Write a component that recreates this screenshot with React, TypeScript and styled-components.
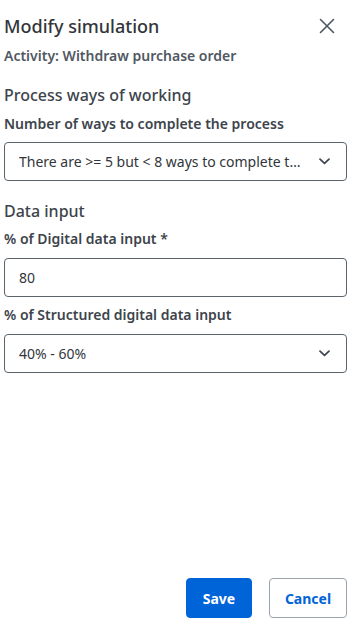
import React from 'react'
import styled, { createGlobalStyle } from 'styled-components'

const Global = createGlobalStyle`
  html, body {
    margin: 0;
    padding: 0;
    background: #ffffff;
  }
  body {
    font-family: "Noto Sans", "Open Sans", sans-serif;
    color: #32363a;
  }
`

const Panel = styled.div`
  width: 363px;
  height: 637px;
  box-sizing: border-box;
  padding: 14px 16px 19px 4px;
  display: flex;
  flex-direction: column;
`

const Header = styled.div`
  display: flex;
  align-items: center;
  justify-content: space-between;
  height: 24px;
`

const Title = styled.h1`
  margin: 0;
  font-size: 18px;
  font-weight: 500;
  line-height: 24px;
  color: #32363a;
`

const CloseButton = styled.button`
  border: none;
  background: none;
  padding: 0;
  margin-right: 12px;
  width: 16px;
  height: 16px;
  display: flex;
  align-items: center;
  justify-content: center;
`

const Activity = styled.div`
  margin-top: 8px;
  font-size: 14px;
  line-height: 20px;
  font-weight: 600;
  color: #505862;
`

const SectionTitle = styled.h2<{ $top: number }>`
  margin: ${p => p.$top}px 0 0;
  font-size: 16px;
  line-height: 22px;
  font-weight: 500;
  color: #3d444c;
`

const Label = styled.label<{ $top: number }>`
  display: block;
  margin-top: ${p => p.$top}px;
  font-size: 14px;
  line-height: 20px;
  font-weight: 600;
  color: #3d444c;
`

const Field = styled.div<{ $top: number }>`
  margin-top: ${p => p.$top}px;
  height: 39px;
  box-sizing: border-box;
  border: 1px solid #5b636b;
  border-radius: 4px;
  display: flex;
  align-items: center;
  padding: 0 16px 0 14px;
  font-size: 14px;
  color: #32363a;
`

const FieldText = styled.span`
  flex: 1;
  white-space: nowrap;
  overflow: hidden;
  text-overflow: ellipsis;
`

const Chevron = styled.svg`
  flex: none;
  margin-left: 16px;
`

const Spacer = styled.div`
  flex: 1;
`

const Footer = styled.div`
  display: flex;
  justify-content: flex-end;
  gap: 17px;
`

const Button = styled.button<{ $primary?: boolean }>`
  height: 40px;
  box-sizing: border-box;
  border-radius: 4px;
  font-family: "Noto Sans", "Open Sans", sans-serif;
  font-size: 14px;
  font-weight: 700;
  padding: 0;
  width: ${p => (p.$primary ? '66px' : '78px')};
  border: 1px solid ${p => (p.$primary ? '#0064d9' : '#9aa3ab')};
  background: ${p => (p.$primary ? '#0064d9' : '#ffffff')};
  color: ${p => (p.$primary ? '#ffffff' : '#0064d9')};
`

const ChevronDown = () => (
  <Chevron width="11" height="7" viewBox="0 0 11 7">
    <path d="M1 1.2 L5.5 5.4 L10 1.2" fill="none" stroke="#3d444c" strokeWidth="1.7" strokeLinecap="round" strokeLinejoin="round" />
  </Chevron>
)

const App: React.FC = () => {
  return (
    <>
      <Global />
      <Panel>
        <Header>
          <Title>Modify simulation</Title>
          <CloseButton aria-label="Close">
            <svg width="16" height="16" viewBox="0 0 16 16">
              <path d="M1.5 1.5 L14.5 14.5 M14.5 1.5 L1.5 14.5" stroke="#4b5661" strokeWidth="1.6" strokeLinecap="round" />
            </svg>
          </CloseButton>
        </Header>
        <Activity>Activity: Withdraw purchase order</Activity>

        <SectionTitle $top={18}>Process ways of working</SectionTitle>
        <Label $top={8}>Number of ways to complete the process</Label>
        <Field $top={8}>
          <FieldText>There are &gt;= 5 but &lt; 8 ways to complete the process</FieldText>
          <ChevronDown />
        </Field>

        <SectionTitle $top={19}>Data input</SectionTitle>
        <Label $top={7}>% of Digital data input *</Label>
        <Field $top={9}>
          <FieldText>80</FieldText>
        </Field>

        <Label $top={8}>% of Structured digital data input</Label>
        <Field $top={9}>
          <FieldText>40% - 60%</FieldText>
          <ChevronDown />
        </Field>

        <Spacer />
        <Footer>
          <Button $primary>Save</Button>
          <Button>Cancel</Button>
        </Footer>
      </Panel>
    </>
  )
}

export default App
